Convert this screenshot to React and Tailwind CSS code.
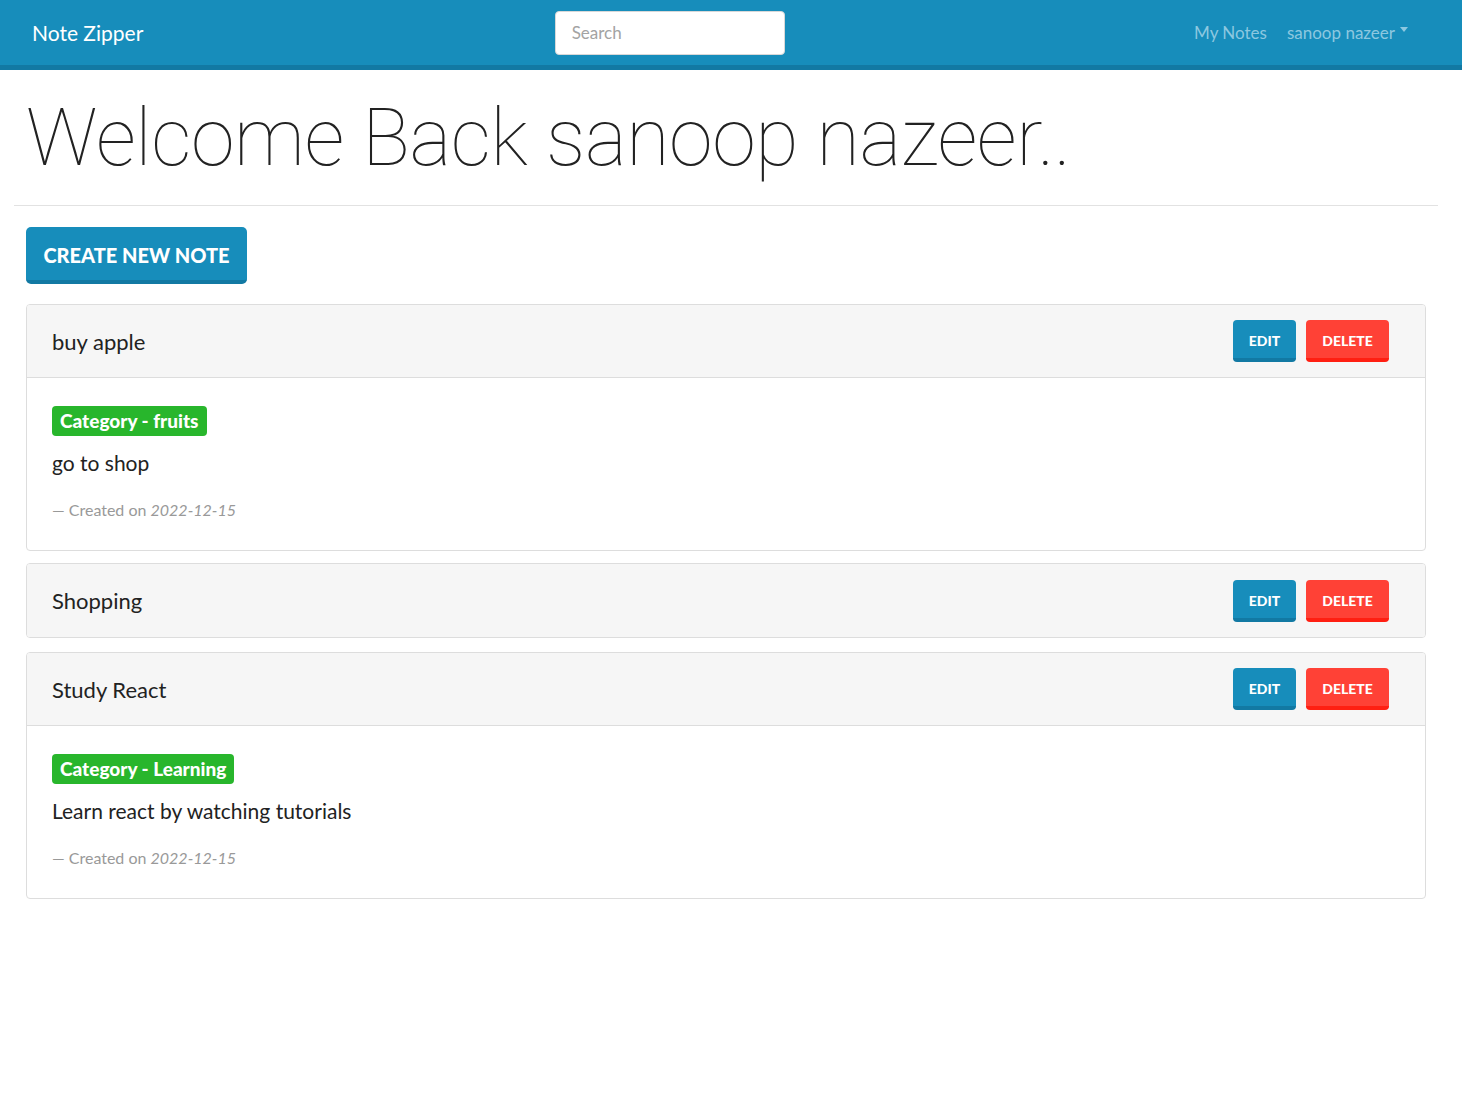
import { useState } from 'react';

const notes = [
  { id: 1, title: 'buy apple', category: 'fruits', content: 'go to shop', createdAt: '2022-12-15', open: true },
  { id: 2, title: 'Shopping', category: 'misc', content: '', createdAt: '2022-12-15', open: false },
  { id: 3, title: 'Study React', category: 'Learning', content: 'Learn react by watching tutorials', createdAt: '2022-12-15', open: true },
];

function Header() {
  const [search, setSearch] = useState('');
  return (
    <nav className="flex items-center h-[70px] bg-[#178dbb] border-b-[5px] border-[#1279a3] pl-8 pr-[54px]">
      <span className="text-white text-[21px]">Note Zipper</span>
      <div className="flex-1 flex justify-center pl-[2px]">
        <input
          value={search}
          onChange={(e) => setSearch(e.target.value)}
          placeholder="Search"
          className="w-[230px] h-[44px] bg-white rounded-[4px] border border-[#d8d8d8] px-4 text-[17px] text-gray-700 placeholder:text-[#a3a3a3] outline-none"
        />
      </div>
      <div className="flex items-center gap-5 text-[17px] text-[#8dc8e0]">
        <span>My Notes</span>
        <span className="flex items-center gap-[5px]">
          sanoop nazeer
          <span className="w-0 h-0 border-l-[4px] border-r-[4px] border-t-[5px] border-l-transparent border-r-transparent border-t-[#8dc8e0] mb-[6px]"></span>
        </span>
      </div>
    </nav>
  );
}

function NoteCard({ note, className }) {
  return (
    <div className={`border border-[#dddddd] rounded-[4px] overflow-hidden ${className}`}>
      <div className={`flex items-center h-[73px] bg-[#f6f6f6] px-[25px] ${note.open ? 'border-b border-[#dddddd]' : ''}`}>
        <span className="flex-1 text-[22px] text-[#222]">{note.title}</span>
        <div className="flex gap-[10px] mr-[11px]">
          <button className="w-[63px] h-[42px] bg-[#178dbb] border-b-4 border-[#1279a3] rounded-[4px] text-white text-[14px] font-black pt-[3px]">EDIT</button>
          <button className="w-[83px] h-[42px] bg-[#ff4136] border-b-4 border-[#ff1f12] rounded-[4px] text-white text-[14px] font-black pt-[3px]">DELETE</button>
        </div>
      </div>
      {note.open && (
        <div className="px-[25px] pt-[28px] pb-[28px]">
          <span className="inline-block bg-[#28b62c] text-white font-black text-[19px] leading-[30px] px-2 rounded-[4px]">
            Category - {note.category}
          </span>
          <p className="text-[21px] leading-[30px] text-[#222] mt-[12px]">{note.content}</p>
          <p className="text-[16px] text-[#999] mt-[20px]">
            — Created on <i>{note.createdAt}</i>
          </p>
        </div>
      )}
    </div>
  );
}

export default function App() {
  return (
    <div className="min-h-screen bg-white font-['Lato','Open_Sans',sans-serif]">
      <Header />
      <div className="pl-[14px] pr-[24px]">
        <h1 className="font-['Roboto',sans-serif] font-thin text-[79px] leading-[96px] text-[#222] pl-[12px] pt-[20px] pb-[19px] border-b border-[#e2e2e2] tracking-[-0.4px]">
          Welcome Back sanoop nazeer..
        </h1>
        <div className="px-[12px]">
          <button className="mt-[21px] w-[221px] h-[57px] bg-[#178dbb] border-b-4 border-[#1279a3] rounded-[5px] text-white text-[20px] font-black pt-[3px]">
            CREATE NEW NOTE
          </button>
          <div className="mt-[20px] flex flex-col">
            {notes.map((n, i) => (
              <NoteCard key={n.id} note={n} className={i === 1 ? 'mt-[12px]' : i === 2 ? 'mt-[14px]' : ''} />
            ))}
          </div>
        </div>
      </div>
    </div>
  );
}
